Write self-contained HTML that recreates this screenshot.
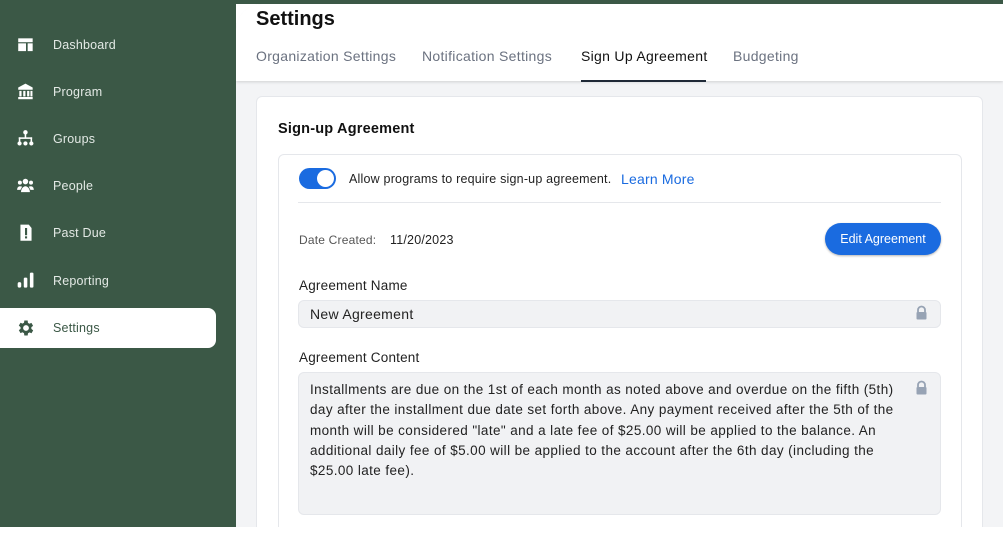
<!DOCTYPE html>
<html><head><style>
*{margin:0;padding:0;box-sizing:border-box}
body{width:1003px;height:552px;overflow:hidden;background:#fff;font-family:"Liberation Sans",sans-serif;position:relative}
.a{position:absolute}
.side{left:0;top:0;width:236px;height:527px;background:#3b5846}
.nav{left:53px;font-size:12.5px;color:#e3e9e5;letter-spacing:.2px}
.ic{left:16px;width:20px;height:20px}
.main{left:236px;top:4px;width:767px;height:523px;background:#f3f4f6;border-top-left-radius:26px;overflow:hidden}
.head{left:0;top:0;width:767px;height:77px;background:#fff;box-shadow:0 1px 3px rgba(0,0,0,.15)}
.tab{top:44px;font-size:14px;color:#6b7280;white-space:nowrap;letter-spacing:.3px}
.t{white-space:nowrap}
</style></head><body>
<div class="a" style="left:0;top:0;width:1003px;height:4px;background:#3b5846"></div>
<div class="a side"></div>
<svg class="a ic" style="top:35px" viewBox="0 0 18 18" fill="#fff"><rect x="2" y="3" width="13" height="3.5"/><rect x="2" y="7.5" width="7" height="7"/><rect x="10.5" y="7.5" width="4.5" height="7"/></svg>
<svg class="a ic" style="top:82px" viewBox="0 0 18 18" fill="#fff"><path d="M8.5 1.5L2 5v2h13V5z"/><rect x="3" y="8" width="2" height="5"/><rect x="6.5" y="8" width="2" height="5"/><rect x="10" y="8" width="2" height="5"/><rect x="13" y="8" width="1.8" height="5"/><rect x="2" y="13.5" width="13" height="2"/></svg>
<svg class="a ic" style="top:129px" viewBox="0 0 18 18" fill="#fff"><circle cx="8.5" cy="3" r="2"/><rect x="7.8" y="4" width="1.4" height="4"/><rect x="2.5" y="7.5" width="12" height="1.4"/><rect x="2.5" y="7.5" width="1.4" height="4"/><rect x="13.1" y="7.5" width="1.4" height="4"/><circle cx="3.2" cy="13" r="1.9"/><circle cx="8.5" cy="13" r="1.9"/><circle cx="13.8" cy="13" r="1.9"/></svg>
<svg class="a ic" style="top:176px" viewBox="0 0 18 18" fill="#fff"><circle cx="8.5" cy="5" r="2.5"/><circle cx="3.5" cy="6" r="1.8"/><circle cx="13.5" cy="6" r="1.8"/><path d="M4.5 14.5c0-3 2-5.3 4-5.3s4 2.3 4 5.3z"/><path d="M1 12.5c0-2 1-3.3 2.5-3.3s2 .5 2 .5L4 12.5z"/><path d="M16 12.5c0-2-1-3.3-2.5-3.3s-2 .5-2 .5L13 12.5z"/></svg>
<svg class="a ic" style="top:223px" viewBox="0 0 18 18"><path d="M4 1.5h7.5l2.5 3V16H4z" fill="#fff"/><rect x="8.1" y="4.5" width="1.9" height="6.5" fill="#3b5846"/><rect x="8.1" y="12" width="1.9" height="1.9" fill="#3b5846"/></svg>
<svg class="a ic" style="top:271px" viewBox="0 0 18 18" fill="#fff"><rect x="1.5" y="10" width="3.2" height="5" rx="1.5"/><rect x="7" y="6" width="3.2" height="9" rx="1"/><rect x="12.5" y="1.5" width="3.2" height="13.5" rx="1"/></svg>
<div class="a nav" style="top:38px">Dashboard</div>
<div class="a nav" style="top:85px">Program</div>
<div class="a nav" style="top:132px">Groups</div>
<div class="a nav" style="top:179px">People</div>
<div class="a nav" style="top:226px">Past Due</div>
<div class="a nav" style="top:274px">Reporting</div>
<div class="a" style="left:0;top:308px;width:216px;height:40px;background:#fff;border-radius:0 8px 8px 0"></div>
<svg class="a ic" style="top:318px" viewBox="0 0 24 24"><path fill="#3b5846" fill-rule="evenodd" d="M19.4 13a7.5 7.5 0 000-2l2.1-1.6-2-3.5-2.5 1a7 7 0 00-1.7-1L15 3h-4l-.4 2.7a7 7 0 00-1.7 1l-2.5-1-2 3.5L6.5 11a7.5 7.5 0 000 2l-2.1 1.6 2 3.5 2.5-1a7 7 0 001.7 1L11 21h4l.4-2.7a7 7 0 001.7-1l2.5 1 2-3.5zM13 15.5a3.5 3.5 0 110-7 3.5 3.5 0 010 7z" transform="translate(-1 0)"/></svg>
<div class="a nav" style="top:321px;color:#3b5846">Settings</div>

<div class="a main">
 <div class="a head"></div>
 <div class="a t" style="left:20px;top:4px;font-size:20px;font-weight:bold;color:#111">Settings</div>
 <div class="a tab" style="left:20px">Organization Settings</div>
 <div class="a tab" style="left:186px">Notification Settings</div>
 <div class="a tab" style="left:345px;color:#111">Sign Up Agreement</div>
 <div class="a" style="left:345px;top:76px;width:125px;height:2px;background:#1f2937"></div>
 <div class="a tab" style="left:497px">Budgeting</div>
 <div class="a" style="left:20px;top:92px;width:727px;height:440px;background:#fff;border:1px solid #e5e7eb;border-radius:6px"></div>
 <div class="a t" style="left:42px;top:117px;font-size:14.5px;font-weight:bold;color:#111;letter-spacing:.2px">Sign-up Agreement</div>
 <div class="a" style="left:42px;top:150px;width:684px;height:380px;border:1px solid #e5e7eb;border-radius:6px"></div>
 <div class="a" style="left:63px;top:164px;width:37px;height:21px;border-radius:11px;background:#1a6be0"></div>
 <div class="a" style="left:81px;top:166px;width:17px;height:17px;border-radius:50%;background:#fff"></div>
 <div class="a t" style="left:113px;top:168px;font-size:12.5px;color:#222;letter-spacing:.2px">Allow programs to require sign-up agreement.</div>
 <div class="a t" style="left:385px;top:167px;font-size:14px;color:#1a6be0;letter-spacing:.2px">Learn More</div>
 <div class="a" style="left:62px;top:198px;width:643px;height:1px;background:#e5e7eb"></div>
 <div class="a t" style="left:63px;top:229px;font-size:12px;color:#555;letter-spacing:.2px">Date Created:</div>
 <div class="a t" style="left:154px;top:229px;font-size:12.5px;color:#222;letter-spacing:.2px">11/20/2023</div>
 <div class="a t" style="left:589px;top:219px;width:116px;height:32px;border-radius:16px;background:#1a6be0;color:#fff;font-size:12.5px;line-height:32px;text-align:center;box-shadow:0 1px 2px rgba(0,0,0,.3)">Edit Agreement</div>
 <div class="a t" style="left:63px;top:274px;font-size:13.5px;color:#222;letter-spacing:.2px">Agreement Name</div>
 <div class="a" style="left:62px;top:296px;width:643px;height:28px;background:#f1f2f4;border:1px solid #e5e7eb;border-radius:6px"></div>
 <div class="a t" style="left:74px;top:302px;font-size:14px;color:#222;letter-spacing:.3px">New Agreement</div>
 <div class="a t" style="left:63px;top:346px;font-size:13.5px;color:#222;letter-spacing:.2px">Agreement Content</div>
 <div class="a" style="left:62px;top:368px;width:643px;height:143px;background:#f1f2f4;border:1px solid #e5e7eb;border-radius:6px"></div>
 <div class="a" style="left:74px;top:376px;width:598px;font-size:13.5px;line-height:20.3px;color:#222;letter-spacing:.4px">Installments are due on the 1st of each month as noted above and overdue on the fifth (5th) day after the installment due date set forth above. Any payment received after the 5th of the month will be considered "late" and a late fee of $25.00 will be applied to the balance. An additional daily fee of $5.00 will be applied to the account after the 6th day (including the $25.00 late fee).</div>
 <svg class="a" style="left:679px;top:301px" width="13" height="15" viewBox="0 0 13 15"><path d="M3 7V5a3.5 3.5 0 017 0v2" stroke="#97a3b4" stroke-width="1.8" fill="none"/><rect x="1.5" y="7" width="10" height="7.5" rx="1" fill="#97a3b4"/></svg>
 <svg class="a" style="left:679px;top:376px" width="13" height="15" viewBox="0 0 13 15"><path d="M3 7V5a3.5 3.5 0 017 0v2" stroke="#97a3b4" stroke-width="1.8" fill="none"/><rect x="1.5" y="7" width="10" height="7.5" rx="1" fill="#97a3b4"/></svg>
</div>
</body></html>
